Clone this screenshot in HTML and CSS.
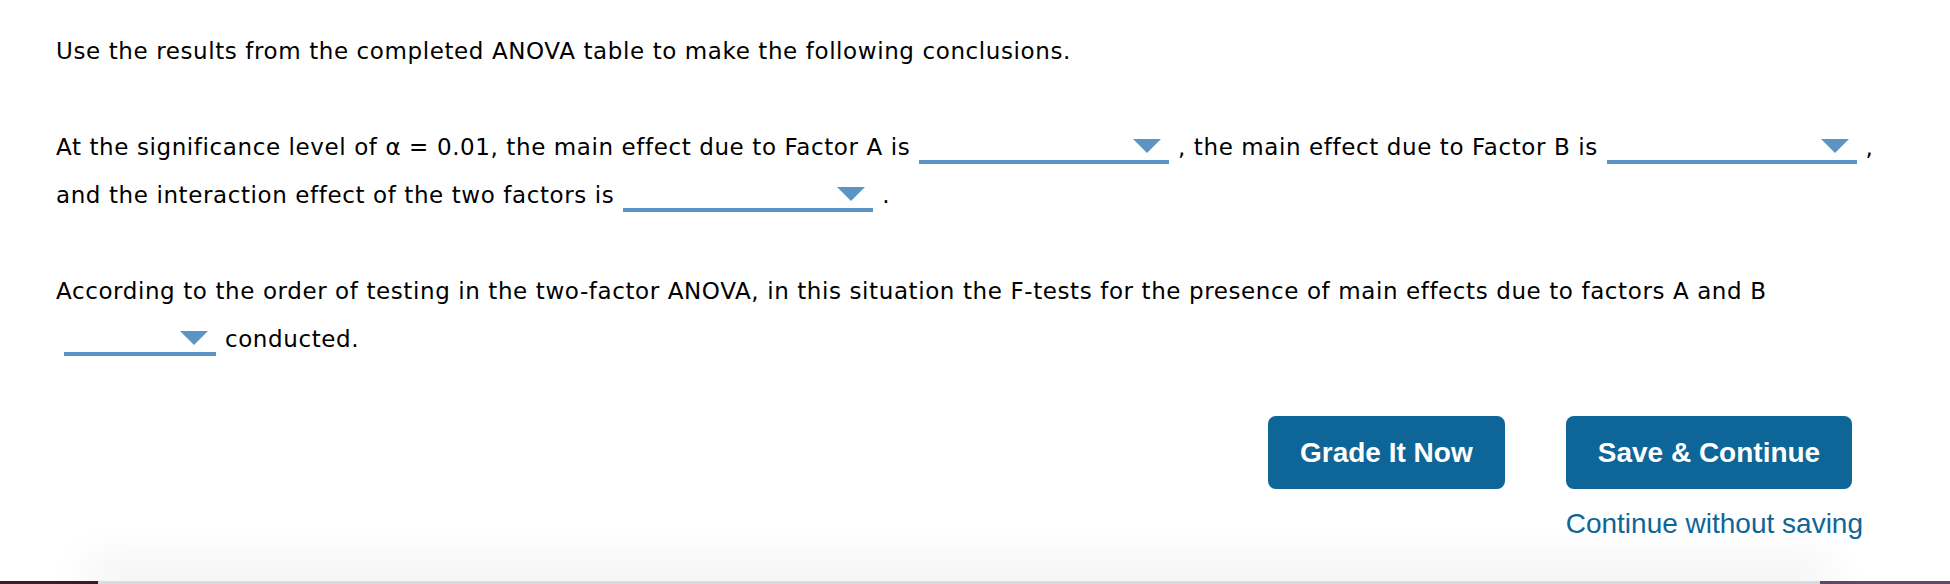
FILE: index.html
```html
<!DOCTYPE html>
<html lang="en">
<head>
    <meta charset="UTF-8">
    <meta name="viewport" content="width=device-width, initial-scale=1.0">
    <title>Two-factor ANOVA conclusions</title>
    <link rel="stylesheet" href="styles.css">
</head>
<body>
    <div class="question">
        <p class="text">Use the results from the completed ANOVA table to make the following conclusions.</p>

        <p class="text">At the significance level of α = 0.01, the main effect due to Factor A is
            <span class="select"><svg class="arrow" width="28" height="14" viewBox="0 0 28 14"><polygon points="0,0 28,0 14,14"/></svg></span>
            , the main effect due to Factor B is
            <span class="select"><svg class="arrow" width="28" height="14" viewBox="0 0 28 14"><polygon points="0,0 28,0 14,14"/></svg></span>
            , and the interaction effect of the two factors is
            <span class="select"><svg class="arrow" width="28" height="14" viewBox="0 0 28 14"><polygon points="0,0 28,0 14,14"/></svg></span>
            .</p>

        <p class="text">According to the order of testing in the two-factor ANOVA, in this situation the F-tests for the presence of main effects due to factors A and B
            <span class="select short"><svg class="arrow" width="28" height="14" viewBox="0 0 28 14"><polygon points="0,0 28,0 14,14"/></svg></span>
            conducted.</p>
    </div>

    <div class="actions">
        <button class="btn">Grade It Now</button>
        <div class="save">
            <button class="btn">Save &amp; Continue</button>
            <a class="skip" href="#">Continue without saving</a>
        </div>
    </div>

    <div class="base">
        <div class="tray"></div>
    </div>
</body>
</html>
```

FILE: styles.css
```css
html, body {
    margin: 0;
    height: 100%;
}

body {
    font-family: "DejaVu Sans", Verdana, sans-serif;
    background-color: #ffffff;
    color: #000000;
    display: flex;
    flex-direction: column;
    overflow: hidden;
}

/* bloco da pergunta */
.question {
    padding: 27px 50px 0 56px;
}

.text {
    font-size: 23px;
    letter-spacing: 0.6px;
    line-height: 48px;
    margin: 0 0 48px 0;
}

.text:last-child {
    margin-bottom: 0;
}

/* lista suspensa */
.select {
    display: inline-block;
    position: relative;
    box-sizing: border-box;
    width: 250px;
    height: 26px;
    margin: 0 1px;
    border-bottom: 4px solid #5b95c5;
    vertical-align: -9px;
}

.select.short {
    width: 152px;
    margin-left: 8px;
}

.arrow {
    position: absolute;
    right: 8px;
    top: 1px;
    fill: #5b95c5;
}

/* botões */
.actions {
    display: flex;
    justify-content: flex-end;
    align-items: flex-start;
    gap: 61px;
    padding: 0 87px 0 0;
    margin-top: 53px;
}

.save {
    display: flex;
    flex-direction: column;
    align-items: flex-start;
}

.btn {
    font-family: "Liberation Sans", Arial, sans-serif;
    font-weight: bold;
    font-size: 28px;
    color: #ffffff;
    background-color: #0e6597;
    border: none;
    border-radius: 8px;
    height: 73px;
    padding: 0 32px;
    cursor: pointer;
}

.skip {
    font-family: "Liberation Sans", Arial, sans-serif;
    font-size: 28px;
    line-height: 32px;
    color: #0e6597;
    text-decoration: none;
    margin-top: 19px;
}

/* borda de baixo */
.base {
    margin-top: auto;
    height: 3px;
    background: linear-gradient(to right, #3b1b2c 0, #3b1b2c 98px, #5d4a67 1820px, #5d4a67 100%);
}

.tray {
    height: 3px;
    margin: 0 130px 0 98px;
    background-color: #dcd9df;
    box-shadow: 0 -8px 40px 14px rgba(0, 0, 0, 0.06);
}
```
